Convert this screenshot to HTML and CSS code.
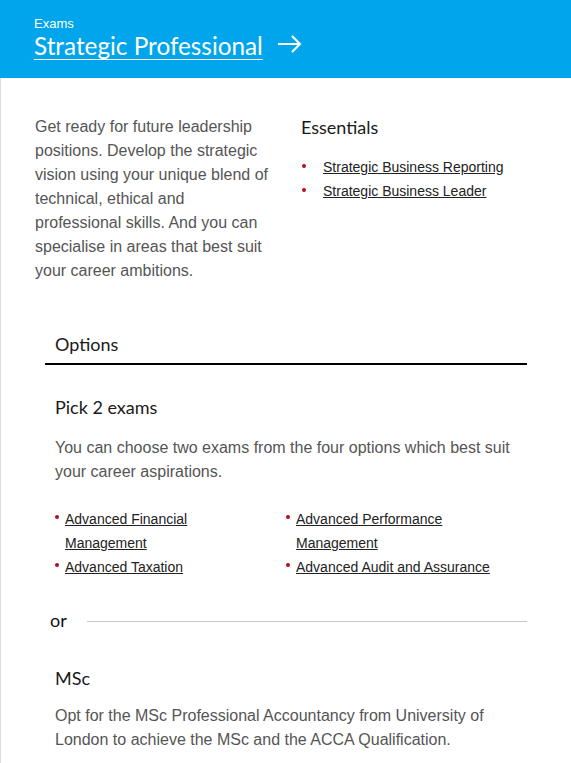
FILE: index.html
```html
<!DOCTYPE html>
<html lang="en">
<head>
<meta charset="utf-8">
<title>Strategic Professional</title>
<link rel="stylesheet" href="styles.css">
</head>
<body>
<div class="page">
  <header class="hero">
    <div class="hero-label">Exams</div>
    <a class="hero-title" href="#">
      <span class="hero-text">Strategic Professional</span>
      <svg class="hero-arrow" width="26" height="20" viewBox="0 0 26 20" aria-hidden="true">
        <path d="M1 10 H23 M15 2 L23 10 L15 18" fill="none" stroke="#fff" stroke-width="2"/>
      </svg>
    </a>
  </header>

  <main class="content">
    <section class="intro">
      <p class="lead">Get ready for future leadership positions. Develop the strategic vision using your unique blend of technical, ethical and professional skills. And you can specialise in areas that best suit your career ambitions.</p>
      <div class="essentials">
        <h3 class="heading">Essentials</h3>
        <ul class="ess-list">
          <li><a href="#">Strategic Business Reporting</a></li>
          <li><a href="#">Strategic Business Leader</a></li>
        </ul>
      </div>
    </section>

    <section class="options">
      <h3 class="heading options-title">Options</h3>
      <div class="group group-pick">
        <h4 class="heading">Pick 2 exams</h4>
        <p class="text">You can choose two exams from the four options which best suit your career aspirations.</p>
        <ul class="opt-list">
          <li><a href="#">Advanced Financial Management</a></li>
          <li><a href="#">Advanced Performance Management</a></li>
          <li><a href="#">Advanced Taxation</a></li>
          <li><a href="#">Advanced Audit and Assurance</a></li>
        </ul>
      </div>
      <div class="or"><span class="or-text">or</span><span class="or-line"></span></div>
      <div class="group group-msc">
        <h4 class="heading">MSc</h4>
        <p class="text">Opt for the MSc Professional Accountancy from University of London to achieve the MSc and the ACCA Qualification.</p>
      </div>
    </section>
  </main>
</div>
</body>
</html>
```

FILE: styles.css
```css
html, body {
  margin: 0;
  padding: 0;
  background: #fff;
}

.page {
  min-height: 763px;
  border-left: 1px solid #dcdcdc;
  font-family: "Liberation Sans", Arial, sans-serif;
}

.hero {
  background: #00a5ec;
  height: 78px;
  box-sizing: border-box;
  padding: 16px 0 0 34px;
  margin-left: -1px;
  color: #fff;
}

.hero-label {
  font-size: 13px;
  line-height: 16px;
}

.hero-title {
  display: inline-flex;
  align-items: center;
  gap: 14px;
  color: #fff;
  text-decoration: none;
}

.hero-text {
  font-family: Lato, "Open Sans", sans-serif;
  font-size: 24.3px;
  line-height: 28px;
  text-decoration: underline;
  text-underline-offset: 4px;
  text-decoration-thickness: 1px;
}

.hero-arrow {
  display: block;
  margin-top: -4px;
}

.content {
  padding: 37px 44px 0 34px;
}

.intro {
  display: flex;
  gap: 31px;
}

.lead {
  width: 235px;
  margin: 0;
  font-size: 16px;
  line-height: 24px;
  color: #555;
}

.heading {
  font-family: Lato, "Open Sans", sans-serif;
  font-weight: 400;
  font-size: 18px;
  line-height: 24px;
  color: #1a1a1a;
  margin: 0;
}

.ess-list {
  list-style: none;
  margin: 16px 0 0;
  padding: 0;
}

.ess-list li,
.opt-list li {
  position: relative;
  font-size: 14px;
  line-height: 24px;
}

.ess-list li {
  padding-left: 22px;
}

.ess-list li::before,
.opt-list li::before {
  content: "";
  position: absolute;
  width: 4px;
  height: 4px;
  border-radius: 50%;
  background: #b01020;
}

.ess-list li::before {
  left: 1px;
  top: 9px;
}

.ess-list a,
.opt-list a {
  color: #222;
  text-decoration: underline;
}

.options {
  margin: 49px 0 0 10px;
}

.options-title {
  padding: 0 10px 7px;
  border-bottom: 2px solid #000;
}

.group {
  padding: 0 10px;
}

.group-pick {
  margin-top: 30px;
}

.group-pick .text {
  margin: 17px 0 0;
}

.group-msc .text {
  margin: 14px 0 0;
}

.text {
  font-size: 16px;
  line-height: 24px;
  color: #555;
}

.opt-list {
  list-style: none;
  margin: 23px 0 0;
  padding: 0;
  display: grid;
  grid-template-columns: 1fr 1fr;
}

.opt-list li {
  padding: 0 18px 0 10px;
}

.opt-list li::before {
  left: 0;
  top: 8px;
}

.or {
  display: flex;
  align-items: center;
  gap: 20px;
  margin: 29px 0 34px 5px;
}

.or-text {
  font-family: Lato, "Open Sans", sans-serif;
  font-size: 18px;
  line-height: 24px;
  color: #111;
}

.or-line {
  flex: 1;
  height: 1px;
  background: #c8c8c8;
  margin-top: 2px;
}
```
